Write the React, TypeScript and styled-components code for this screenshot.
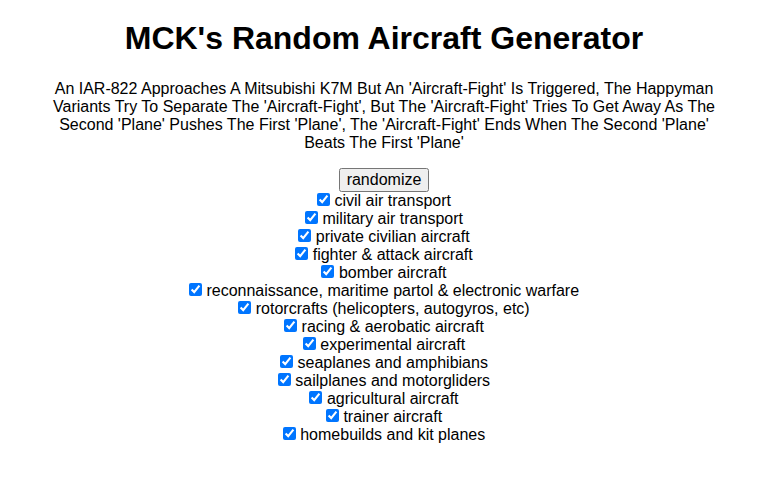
import React, { useState } from 'react'
import styled, { createGlobalStyle } from 'styled-components'

const categories = [
  'civil air transport',
  'military air transport',
  'private civilian aircraft',
  'fighter & attack aircraft',
  'bomber aircraft',
  'reconnaissance, maritime partol & electronic warfare',
  'rotorcrafts (helicopters, autogyros, etc)',
  'racing & aerobatic aircraft',
  'experimental aircraft',
  'seaplanes and amphibians',
  'sailplanes and motorgliders',
  'agricultural aircraft',
  'trainer aircraft',
  'homebuilds and kit planes',
]

const GlobalStyle = createGlobalStyle`
  body {
    margin: 8px;
    background: #fff;
    color: #000;
    font-family: "Liberation Sans", Arial, sans-serif;
  }
`

const Page = styled.div`
  text-align: center;
`

const Title = styled.h1`
  font-size: 32px;
  font-weight: bold;
  margin: 12px 0 23px;
`

const Scenario = styled.p`
  font-size: 16px;
  line-height: 18px;
  margin: 16px 40px;
`

const RandomizeButton = styled.button`
  font-family: "Liberation Sans", Arial, sans-serif;
  font-size: 16px;
  padding: 1px 6px;
`

const Options = styled.div`
  font-size: 16px;
  line-height: 18px;
`

const Option = styled.label`
  display: block;

  input {
    margin: 0;
    width: 13px;
    height: 13px;
  }
`

const App = () => {
  const [checked, setChecked] = useState<boolean[]>(categories.map(() => true))

  const toggle = (i: number) => {
    setChecked(prev => prev.map((c, j) => (j === i ? !c : c)))
  }

  return (
    <Page>
      <GlobalStyle />
      <Title>MCK's Random Aircraft Generator</Title>
      <Scenario>
        An IAR-822 Approaches A Mitsubishi K7M But An 'Aircraft-Fight' Is Triggered, The Happyman
        Variants Try To Separate The 'Aircraft-Fight', But The 'Aircraft-Fight' Tries To Get Away As
        The Second 'Plane' Pushes The First 'Plane', The 'Aircraft-Fight' Ends When The Second
        'Plane' Beats The First 'Plane'
      </Scenario>
      <RandomizeButton>randomize</RandomizeButton>
      <Options>
        {categories.map((c, i) => (
          <Option key={c}>
            <input type="checkbox" checked={checked[i]} onChange={() => toggle(i)} /> {c}
          </Option>
        ))}
      </Options>
    </Page>
  )
}

export default App
